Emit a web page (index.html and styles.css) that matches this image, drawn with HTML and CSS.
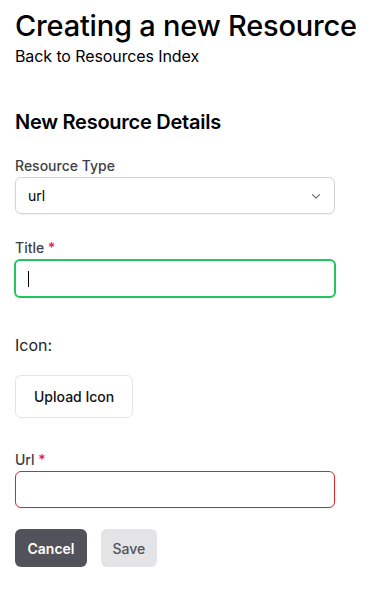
FILE: index.html
```html
<!DOCTYPE html>
<html lang="en">
<head>
  <meta charset="UTF-8">
  <title>New Resource</title>
  <link rel="stylesheet" href="styles.css">
</head>
<body>

<div class="page">
  <h1 class="page-title">Creating a new Resource</h1>
  <a class="back-link" href="#">Back to Resources Index</a>

  <form class="resource-form">
    <h2 class="form-title">New Resource Details</h2>

    <div class="field">
      <label class="field-label" for="type">Resource Type</label>
      <div class="select-wrap">
        <select id="type" class="field-input">
          <option>url</option>
        </select>
        <svg class="select-arrow" width="14" height="14" viewBox="0 0 20 20" fill="none" stroke="#6b7280" stroke-width="1.8" stroke-linecap="round" stroke-linejoin="round"><path d="M5 8l5 5 5-5"/></svg>
      </div>
    </div>

    <div class="field">
      <label class="field-label" for="title">Title <span class="req">*</span></label>
      <div class="field-input input-focus"><span class="caret"></span></div>
    </div>

    <div class="field icon-field">
      <div class="icon-label">Icon:</div>
      <button type="button" class="btn-upload">Upload Icon</button>
    </div>

    <div class="field field-last">
      <label class="field-label" for="url">Url <span class="req">*</span></label>
      <input id="url" class="field-input input-error" type="text">
    </div>

    <div class="actions">
      <button type="button" class="btn btn-cancel">Cancel</button>
      <button type="button" class="btn btn-save">Save</button>
    </div>
  </form>
</div>

</body>
</html>
```

FILE: styles.css
```css
body {
  margin: 0;
  font-family: Inter, "Noto Sans", sans-serif;
  color: #000;
  background: #fff;
}

.page {
  padding: 8px 15px;
}

.page-title {
  font-size: 29px;
  line-height: 36px;
  font-weight: 500;
  letter-spacing: -0.2px;
  margin: 0;
  white-space: nowrap;
}

.back-link {
  display: block;
  font-size: 16px;
  line-height: 24px;
  letter-spacing: -0.1px;
  color: #000;
  text-decoration: none;
}

.resource-form {
  margin-top: 40px;
  width: 320px;
}

.form-title {
  font-size: 20px;
  line-height: 28px;
  font-weight: 600;
  letter-spacing: -0.25px;
  margin: 0 0 20px;
}

.field {
  margin-bottom: 24px;
}

.field-last {
  margin-bottom: 21px;
}

.field-label {
  display: block;
  font-size: 14px;
  line-height: 20px;
  font-weight: 500;
  color: #3f3f46;
  margin-bottom: 1px;
}

.req {
  color: #e11d48;
}

.select-wrap {
  position: relative;
}

.field-input {
  display: block;
  box-sizing: border-box;
  width: 100%;
  height: 37px;
  border: 1px solid #d4d4d8;
  border-radius: 6px;
  background: #fff;
  font-family: inherit;
  font-size: 14px;
  padding: 0 12px;
  appearance: none;
  box-shadow: 0 1px 2px rgba(0, 0, 0, 0.05);
}

.select-arrow {
  position: absolute;
  right: 12px;
  top: 12px;
}

.input-focus {
  height: 39px;
  border: 2px solid #22c55e;
  width: calc(100% + 2px);
  margin-left: -1px;
  display: flex;
  align-items: center;
  padding-left: 12px;
}

.caret {
  width: 1px;
  height: 16px;
  background: #000;
}

.input-error {
  border-color: #dc2626;
}

.icon-field {
  margin-top: 35px;
  margin-bottom: 32px;
}

.icon-label {
  font-size: 16px;
  line-height: 24px;
  color: #222;
  margin-bottom: 18px;
}

.btn-upload {
  font-family: inherit;
  font-size: 14px;
  font-weight: 500;
  color: #111;
  background: #fff;
  border: 1px solid #e4e4e7;
  border-radius: 6px;
  padding: 0 18px;
  height: 43px;
}

.actions {
  display: flex;
  gap: 14px;
}

.btn {
  font-family: inherit;
  font-size: 14px;
  font-weight: 600;
  border: 0;
  border-radius: 6px;
  height: 38px;
  padding: 0 12.5px;
}

.btn-cancel {
  background: #52525b;
  color: #fff;
}

.btn-save {
  background: #e4e4e7;
  color: #52525b;
  font-weight: 500;
  padding: 0 11.5px;
}
```
